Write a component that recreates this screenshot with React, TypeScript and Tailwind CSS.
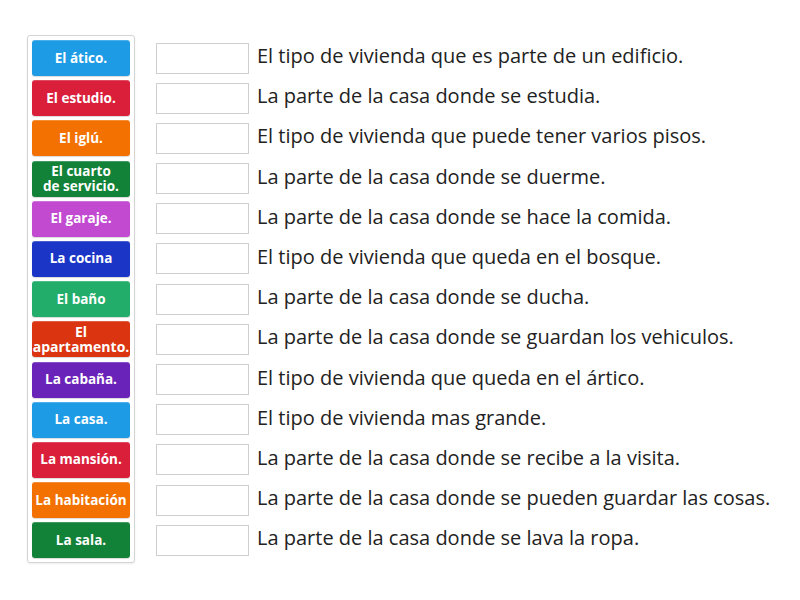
import React from 'react';

const TILES: { label: string; color: string }[] = [
  { label: 'El ático.', color: 'bg-[#1e9be5]' },
  { label: 'El estudio.', color: 'bg-[#da1f3b]' },
  { label: 'El iglú.', color: 'bg-[#f27100]' },
  { label: 'El cuarto de servicio.', color: 'bg-[#138239]' },
  { label: 'El garaje.', color: 'bg-[#c14ad1]' },
  { label: 'La cocina', color: 'bg-[#1b36c6]' },
  { label: 'El baño', color: 'bg-[#22ad6a]' },
  { label: 'El apartamento.', color: 'bg-[#da3411]' },
  { label: 'La cabaña.', color: 'bg-[#6a23b8]' },
  { label: 'La casa.', color: 'bg-[#1e9be5]' },
  { label: 'La mansión.', color: 'bg-[#da1f3b]' },
  { label: 'La habitación', color: 'bg-[#f27100]' },
  { label: 'La sala.', color: 'bg-[#138239]' },
];

const DEFINITIONS = [
  'El tipo de vivienda que es parte de un edificio.',
  'La parte de la casa donde se estudia.',
  'El tipo de vivienda que puede tener varios pisos.',
  'La parte de la casa donde se duerme.',
  'La parte de la casa donde se hace la comida.',
  'El tipo de vivienda que queda en el bosque.',
  'La parte de la casa donde se ducha.',
  'La parte de la casa donde se guardan los vehiculos.',
  'El tipo de vivienda que queda en el ártico.',
  'El tipo de vivienda mas grande.',
  'La parte de la casa donde se recibe a la visita.',
  'La parte de la casa donde se pueden guardar las cosas.',
  'La parte de la casa donde se lava la ropa.',
];

export default function App() {
  return (
    <div className="w-[800px] h-[600px] bg-white font-['Open_Sans',sans-serif] flex items-start pt-[35px] pl-[27px]">
      {/* tile bank */}
      <div className="w-[108px] border border-[#d4d4d4] rounded-[3px] p-1 flex flex-col gap-[4.2px] shadow-[0_1px_2px_rgba(0,0,0,0.08)]">
        {TILES.map((t) => (
          <div
            key={t.label}
            className={`${t.color} h-9 rounded-[3px] flex items-center justify-center text-center text-white font-bold text-[13.5px] leading-[15px] px-0.5 whitespace-nowrap shadow-[inset_0_1px_0_rgba(255,255,255,0.2),0_1px_1px_rgba(0,0,0,0.15)]`}
          >
            {t.label === 'El cuarto de servicio.' ? (
              <span>El cuarto<br />de servicio.</span>
            ) : t.label === 'El apartamento.' ? (
              <span className="text-[14px]">El<br />apartamento.</span>
            ) : (
              t.label
            )}
          </div>
        ))}
      </div>

      {/* answer rows */}
      <div className="ml-[21px] mt-[5px] flex flex-col gap-[4.2px]">
        {DEFINITIONS.map((d) => (
          <div key={d} className="h-9 flex items-center">
            <div className="w-[93px] h-[31px] border border-[#cfcfcf] bg-white shrink-0" />
            <span className="ml-2 -mt-1 text-[20px] leading-[28px] text-[#222] whitespace-nowrap">{d}</span>
          </div>
        ))}
      </div>
    </div>
  );
}
